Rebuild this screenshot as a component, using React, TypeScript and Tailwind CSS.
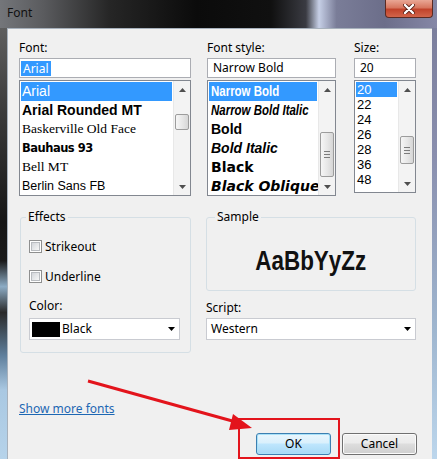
import React from "react";

const ui = "font-['Segoe_UI','Noto_Sans',sans-serif]";

type ScrollProps = { thumb: string; grip?: boolean };

const UpArrow = () => (
  <svg width="7" height="4" viewBox="0 0 7 4">
    <path d="M0 4 L3.5 0 L7 4 Z" fill="#4f4f4f" />
  </svg>
);

const DownArrow = () => (
  <svg width="7" height="4" viewBox="0 0 7 4">
    <path d="M0 0 L3.5 4 L7 0 Z" fill="#4f4f4f" />
  </svg>
);

const ScrollBar = ({ thumb, grip }: ScrollProps) => (
  <div className="w-[17px] h-full flex flex-col bg-[#f3f3f3] border-l border-[#e8e8e8]">
    <div className="h-[17px] flex items-center justify-center">
      <UpArrow />
    </div>
    <div className="flex-1">
      <div
        className={`${thumb} mx-[1px] rounded-[2px] border border-[#9c9c9c] bg-[linear-gradient(to_right,#f6f6f6,#e6e6e6_55%,#d6d6d6)] flex flex-col items-center justify-center gap-[2px]`}
      >
        {grip && (
          <>
            <div className="w-[6px] h-[1px] bg-[#7c7c7c]" />
            <div className="w-[6px] h-[1px] bg-[#7c7c7c]" />
            <div className="w-[6px] h-[1px] bg-[#7c7c7c]" />
          </>
        )}
      </div>
    </div>
    <div className="h-[17px] flex items-center justify-center">
      <DownArrow />
    </div>
  </div>
);

const Checkbox = ({ label }: { label: string }) => (
  <div className="flex items-center h-[13px]">
    <div className="w-[13px] h-[13px] border border-[#8e8f8f] bg-white p-[1px]">
      <div className="w-full h-full border border-[#b9bcc0] bg-[linear-gradient(to_bottom_right,#d3d6da,#f7f7f7)]" />
    </div>
    <span className="ml-[3px] text-[12px] leading-none text-black">{label}</span>
  </div>
);

// no narrow face is installed, so the narrow styles are squeezed horizontally
const narrow = "inline-block origin-left scale-x-[0.82] whitespace-nowrap";

const fontRows = [
  { name: "Arial Rounded MT", cls: "font-['Liberation_Sans',sans-serif] font-bold text-[14px]" },
  { name: "Baskerville Old Face", cls: "font-['Liberation_Serif',serif] text-[13.5px]" },
  { name: "Bauhaus 93", cls: "font-['DejaVu_Sans',sans-serif] font-bold tracking-[-0.5px] text-[11.5px]" },
  { name: "Bell MT", cls: "font-['Liberation_Serif',serif] text-[13.5px]" },
  { name: "Berlin Sans FB", cls: "font-['Liberation_Sans',sans-serif] text-[12.5px]" },
];

const styleRows = [
  { name: "Bold", cls: "font-['Liberation_Sans',sans-serif] font-bold text-[14px]" },
  { name: "Bold Italic", cls: "font-['Liberation_Sans',sans-serif] font-bold italic text-[14px]" },
  { name: "Black", cls: "font-['DejaVu_Sans',sans-serif] font-bold text-[14px]" },
  { name: "Black Oblique", cls: "font-['DejaVu_Sans',sans-serif] font-bold italic text-[14px]" },
];

const sizes = ["22", "24", "26", "28", "36", "48"];

export default function App() {
  return (
    <div className={`w-[437px] h-[459px] overflow-hidden relative flex flex-col ${ui} text-black`}>
      {/* title bar */}
      <div className="h-[28px] flex items-start bg-[linear-gradient(to_right,#74767a_0%,#5a5b5e_10%,#262626_25%,#0b0b0b_45%,#101010_62%,#3a3b42_70%,#c6cfe6_73%,#7a7d98_77%,#6c6e8a_88%,#8587a6_100%)]">
        <span className="pl-[7px] pt-[5px] text-[12px] leading-[16px] text-[#111]">Font</span>
        <div className="ml-auto mr-[4px] w-[48px] h-[18px] rounded-b-[4px] border border-t-0 border-[#5b2a22] bg-[linear-gradient(to_bottom,#e9a795_0%,#d7765f_45%,#c1432b_55%,#d2654a_100%)] flex items-center justify-center">
          <svg width="12" height="10" viewBox="0 0 12 10">
            <path d="M2 1 L10 9 M10 1 L2 9" stroke="#5a1f15" strokeWidth="4" strokeLinecap="round" />
            <path d="M2 1 L10 9 M10 1 L2 9" stroke="#ffffff" strokeWidth="2.4" strokeLinecap="round" />
          </svg>
        </div>
      </div>

      <div className="flex-1 flex">
        {/* left frame */}
        <div className="w-[7px] bg-[linear-gradient(to_bottom,#5e5e5e_0%,#3a3a3a_20%,#161616_45%,#1a1a1a_54%,#8cabc4_60%,#2a2a2a_66%,#5f7f9c_76%,#a9c8e2_84%,#b6d3ea_100%)]" />

        {/* client */}
        <div className="flex-1 bg-[#f0f0f0] border-t border-l border-[#a7b1bc] pl-[11px] pt-[11px] pr-[15px] flex flex-col">
          {/* row 1 */}
          <div className="flex items-start">
            {/* font */}
            <div className="w-[172px] flex flex-col">
              <span className="text-[12px] leading-[15px]">Font:</span>
              <div className="mt-[3px] h-[20px] border border-[#abadb3] bg-white flex items-center pl-[1px]">
                <span className="bg-[#3399ff] text-white text-[12px] leading-[15px] px-[2px]">Arial</span>
              </div>
              <div className="mt-[2px] h-[116px] border border-[#828790] bg-white flex">
                <div className="flex-1 p-[1px] overflow-hidden">
                  <div className="h-[19px] flex items-center bg-[#3399ff] text-white pl-[1px] font-['Liberation_Sans',sans-serif] text-[14px]">
                    Arial
                  </div>
                  {fontRows.map((r) => (
                    <div key={r.name} className={`h-[19px] flex items-center pl-[1px] whitespace-nowrap ${r.cls}`}>
                      {r.name}
                    </div>
                  ))}
                </div>
                <ScrollBar thumb="mt-[16px] h-[16px]" />
              </div>
            </div>

            {/* font style */}
            <div className="ml-[16px] w-[129px] flex flex-col">
              <span className="text-[12px] leading-[15px]">Font style:</span>
              <div className="mt-[3px] h-[20px] border border-[#abadb3] bg-white flex items-center pl-[5px] text-[12px]">
                Narrow Bold
              </div>
              <div className="mt-[2px] h-[116px] border border-[#828790] bg-white flex">
                <div className="flex-1 p-[1px] overflow-hidden">
                  <div className="h-[19px] flex items-center bg-[#3399ff] text-white pl-[2px] font-['Liberation_Sans',sans-serif] font-bold text-[14px]">
                    <span className={narrow}>Narrow Bold</span>
                  </div>
                  <div className="h-[19px] flex items-center pl-[2px] font-['Liberation_Sans',sans-serif] font-bold italic text-[14px]">
                    <span className={narrow}>Narrow Bold Italic</span>
                  </div>
                  {styleRows.map((r) => (
                    <div key={r.name} className={`h-[19px] flex items-center pl-[2px] whitespace-nowrap ${r.cls}`}>
                      {r.name}
                    </div>
                  ))}
                </div>
                <ScrollBar thumb="mt-[34px] h-[45px]" grip />
              </div>
            </div>

            {/* size */}
            <div className="ml-[18px] w-[62px] flex flex-col">
              <span className="text-[12px] leading-[15px]">Size:</span>
              <div className="mt-[3px] h-[20px] border border-[#abadb3] bg-white flex items-center pl-[5px] text-[12px]">
                20
              </div>
              <div className="mt-[2px] h-[113px] border border-[#828790] bg-white flex">
                <div className="flex-1 p-[1px] overflow-hidden font-['Liberation_Sans',sans-serif] text-[13px] leading-[15px]">
                  <div className="h-[15px] bg-[#3399ff] text-white pl-[1px]">20</div>
                  {sizes.map((s) => (
                    <div key={s} className="h-[15px] pl-[1px]">
                      {s}
                    </div>
                  ))}
                </div>
                <ScrollBar thumb="mt-[38px] h-[28px]" grip />
              </div>
            </div>
          </div>

          {/* row 2 */}
          <div className="mt-[14px] flex items-start">
            <fieldset className="ml-[1px] w-[171px] h-[143px] border border-[#d5dfe5] rounded-[3px] pt-[16px] px-[8px]">
              <legend className="-ml-[3px] px-[2px] text-[12px] leading-[14px]">Effects</legend>
              <Checkbox label="Strikeout" />
              <div className="mt-[17px]">
                <Checkbox label="Underline" />
              </div>
              <div className="mt-[15px] text-[12px] leading-[15px]">Color:</div>
              <div className="mt-[5px] mr-[2px] h-[22px] border border-[#c9cbd1] bg-white flex items-center pl-[2px] pr-[4px]">
                <div className="w-[28px] h-[15px] bg-black" />
                <span className="ml-[2px] text-[12px]">Black</span>
                <div className="ml-auto">
                  <svg width="7" height="4" viewBox="0 0 7 4">
                    <path d="M0 0 L3.5 4 L7 0 Z" fill="#000" />
                  </svg>
                </div>
              </div>
            </fieldset>

            <div className="ml-[15px] w-[210px] flex flex-col">
              <fieldset className="h-[81px] border border-[#d5dfe5] rounded-[3px] px-[8px]">
                <legend className="ml-[0px] px-[2px] text-[12px] leading-[14px]">Sample</legend>
                <div className="h-[66px] pt-[8px] flex items-center justify-center">
                  <span className="inline-block scale-x-[0.83] font-['Liberation_Sans',sans-serif] font-bold text-[27px] leading-none text-[#111]">
                    AaBbYyZz
                  </span>
                </div>
              </fieldset>
              <span className="mt-[9px] text-[12px] leading-[15px]">Script:</span>
              <div className="mt-[3px] h-[22px] border border-[#c9cbd1] bg-white flex items-center pl-[4px] pr-[4px] text-[12px]">
                Western
                <div className="ml-auto">
                  <svg width="7" height="4" viewBox="0 0 7 4">
                    <path d="M0 0 L3.5 4 L7 0 Z" fill="#000" />
                  </svg>
                </div>
              </div>
            </div>
          </div>

          {/* link */}
          <div className="mt-[48px] text-[12px] leading-[15px]">
            <span className="text-[#1d67b3] underline">Show more fonts</span>
          </div>

          {/* buttons */}
          <div className="mt-[17px] flex justify-end gap-[11px]">
            <div className="w-[75px] h-[22px] rounded-[3px] border border-[#3c7fb1] bg-[linear-gradient(to_bottom,#eaf6fd_0%,#d9f0fc_45%,#bee6fd_50%,#a7d9f5_100%)] flex items-center justify-center text-[12px] shadow-[inset_0_0_0_1px_#a9e1f8]">
              OK
            </div>
            <div className="w-[75px] h-[22px] rounded-[3px] border border-[#707070] bg-[linear-gradient(to_bottom,#f2f2f2_0%,#ebebeb_45%,#dddddd_50%,#cfcfcf_100%)] flex items-center justify-center text-[12px] shadow-[inset_0_0_0_1px_#fbfbfb]">
              Cancel
            </div>
          </div>
        </div>

        {/* right frame */}
        <div className="w-[5px] bg-[linear-gradient(to_bottom,#7b7e9c_0%,#8a8fae_30%,#9fb6cf_70%,#bcd6ec_100%)]" />
      </div>

      {/* annotation overlay */}
      <div className="absolute left-[238px] top-[418px] w-[102px] h-[41px] border-2 border-[#e3141c] pointer-events-none" />
      <svg className="absolute left-0 top-0 pointer-events-none" width="437" height="459" viewBox="0 0 437 459">
        <line x1="88" y1="381" x2="236" y2="422" stroke="#e3141c" strokeWidth="3" />
        <polygon points="252,428 233,414 229,430" fill="#e3141c" />
      </svg>
    </div>
  );
}
